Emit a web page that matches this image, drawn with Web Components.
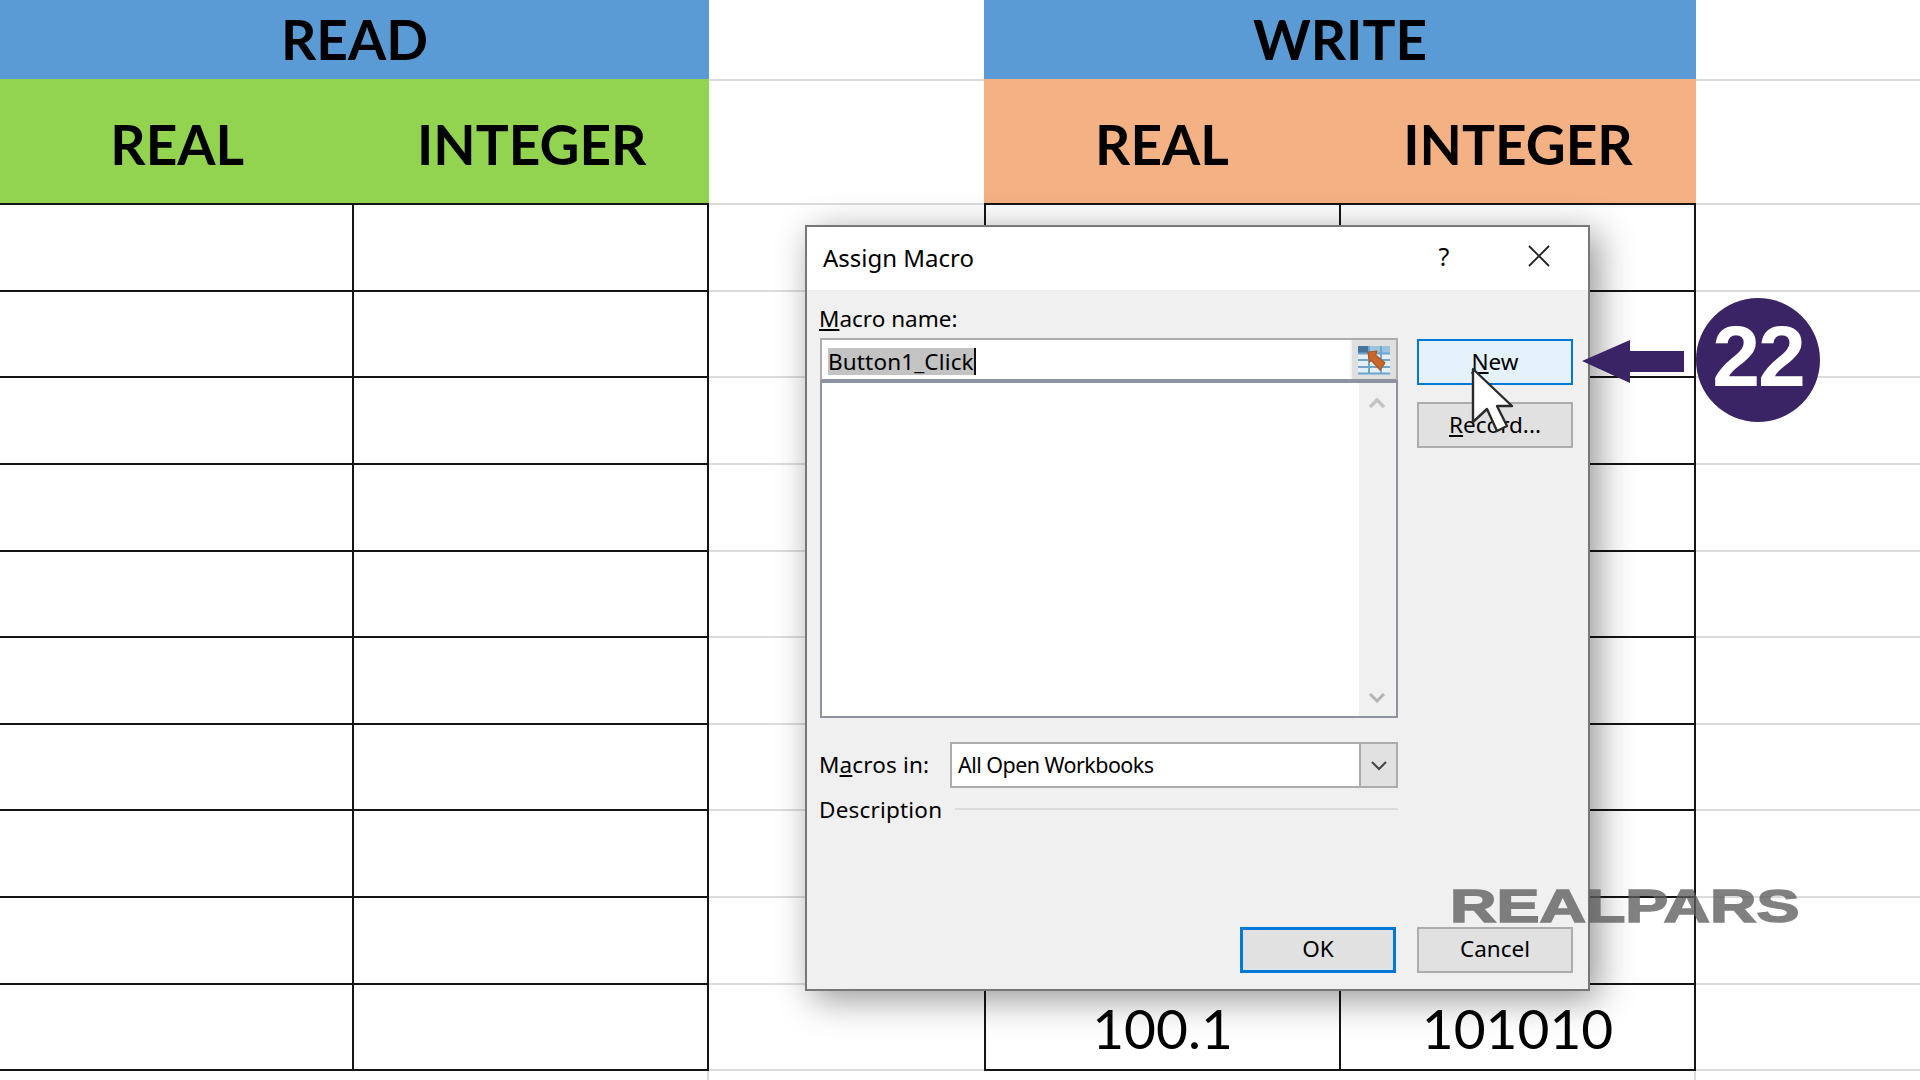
<!DOCTYPE html>
<html lang="en">
<head>
<meta charset="utf-8">
<title>Assign Macro</title>
<style>
html, body { margin: 0; padding: 0; background: #fff; overflow: hidden; }
body { width: 1920px; height: 1080px; position: relative; font-family: "Noto Sans", sans-serif; color: #000; }
</style>
</head>
<body>
<xl-sheet>
	<xl-table title="READ" band="#92d350" left-edge="no"></xl-table>
	<xl-gap></xl-gap>
	<xl-table title="WRITE" band="#f4b183" real="100.1" integer="101010"></xl-table>
	<xl-gap></xl-gap>
</xl-sheet>

<assign-macro>
	<dlg-button slot="side" kind="hover"><u>N</u>ew</dlg-button>
	<dlg-button slot="side"><u>R</u>ecord...</dlg-button>
	<dlg-button slot="foot" kind="default">OK</dlg-button>
	<dlg-button slot="foot">Cancel</dlg-button>
</assign-macro>

<realpars-logo></realpars-logo>
<mouse-cursor></mouse-cursor>
<step-callout number="22"></step-callout>

<script>
	// Spreadsheet background: a table, a gap, a table, a gap.
	class XlSheet extends HTMLElement {
		constructor () {
			super()
			this.attachShadow({ mode: 'open' })
			this.shadowRoot.innerHTML = `
				<style>
					:host { display: grid; grid-template-columns: 709px 275px 712px 224px; height: 1080px; overflow: hidden; }
				</style>
				<slot></slot>
			`
		}
	}

	// Empty cells between the tables, only the pale gridlines show.
	class XlGap extends HTMLElement {
		constructor () {
			super()
			this.attachShadow({ mode: 'open' })
			const rows = Array.from({ length: 11 }, () => '<div class="row"></div>').join('')
			this.shadowRoot.innerHTML = `
				<style>
					:host { display: block; }
					.row { height: 86.65px; box-sizing: border-box; border-bottom: 2px solid #dcdcdc; }
					.top { height: 81px; box-sizing: border-box; border-bottom: 2px solid #dcdcdc; }
					.band { height: 124px; box-sizing: border-box; border-bottom: 2px solid #dcdcdc; }
				</style>
				<div class="top"></div>
				<div class="band"></div>
				${rows}
			`
		}
	}

	class XlTable extends HTMLElement {
		constructor () {
			super()
			this.attachShadow({ mode: 'open' })
		}

		connectedCallback () {
			const title = this.getAttribute('title')
			const band = this.getAttribute('band')
			const real = this.getAttribute('real') || ''
			const integer = this.getAttribute('integer') || ''
			const noEdge = this.getAttribute('left-edge') === 'no'
			const cols = noEdge ? '354px 355px' : '1fr 1fr'
			let rows = ''
			for (let i = 0; i < 10; i++) {
				const last = i === 9
				rows += `<div class="cell">${last ? real : ''}</div><div class="cell">${last ? integer : ''}</div>`
			}
			this.shadowRoot.innerHTML = `
				<style>
					:host { display: block; font-family: Lato, "Open Sans", sans-serif; color: #000; }
					.title { height: 79px; background: #5b9bd5; display: flex; align-items: center; justify-content: center; font-size: 55px; font-weight: 700; padding-bottom: 2px; box-sizing: border-box; }
					.band { height: 124px; background: ${band}; display: grid; grid-template-columns: 1fr 1fr; border-bottom: 2px solid #151515; box-sizing: content-box; }
					.band div { display: flex; align-items: center; justify-content: center; font-size: 55px; font-weight: 700; padding-top: 6px; box-sizing: border-box; }
					.body { display: grid; grid-template-columns: ${cols}; grid-auto-rows: 86.65px; border-left: ${noEdge ? '0' : '2px solid #151515'}; }
					.cell { border-right: 2px solid #151515; border-bottom: 2px solid #151515; box-sizing: border-box; display: flex; align-items: center; justify-content: center; font-size: 55px; padding-top: 2px; }
					.tail { height: 10px; margin-left: auto; width: 2px; background: #dcdcdc; }
				</style>
				<div class="title">${title}</div>
				<div class="band"><div>REAL</div><div>INTEGER</div></div>
				<div class="body">${rows}</div>
				<div class="tail"></div>
			`
		}
	}

	// The Excel dialog, floats over the sheet like a window.
	class AssignMacro extends HTMLElement {
		constructor () {
			super()
			this.attachShadow({ mode: 'open' })
			this.shadowRoot.innerHTML = `
				<style>
					:host {
						position: absolute; left: 805px; top: 225px; width: 785px; height: 766px;
						box-sizing: border-box; display: flex; flex-direction: column;
						background: #f0f0f0; border: 2px solid #777;
						box-shadow: 8px 8px 34px rgba(0,0,0,.42);
						font-family: "Noto Sans", "Open Sans", sans-serif; font-size: 22.5px; color: #000;
					}
					.titlebar { height: 63px; flex: none; background: #fff; display: flex; align-items: center; padding-left: 16px; }
					.titlebar .name { flex: 1; font-size: 24px; padding-bottom: 2px; }
					.help { width: 30px; text-align: center; margin-right: 68px; font-size: 25px; margin-top: -6px; }
					.close { width: 24px; height: 24px; margin-right: 37px; margin-top: -6px; }
					.main { flex: 1; display: flex; flex-direction: column; padding: 0 15px 16px 13px; }
					.top { flex: 1; display: grid; grid-template-columns: 578px 156px; column-gap: 19px; align-items: start; }
					.left { display: flex; flex-direction: column; }
					.label { height: 48px; display: flex; align-items: center; padding-top: 8px; box-sizing: border-box; margin-left: -1px; }
					.input { height: 43px; box-sizing: border-box; border: 2px solid #adadad; border-bottom-color: #8f93a0; background: #fff; display: flex; align-items: stretch; }
					.field { flex: 1; display: flex; align-items: center; padding: 4px 0 0 6px; }
					.sel { background: #c3c3c3; height: 27px; line-height: 27px; border-right: 2px solid #111; letter-spacing: .15px; }
					.pick { width: 44px; background: #dfdfdf; border-left: 2px solid #f4f4f4; display: flex; align-items: center; justify-content: center; }
					.list { height: 337px; box-sizing: border-box; border: 2px solid #8f93a0; background: #fff; display: flex; justify-content: flex-end; }
					.bar { width: 37px; background: #f0f0f0; display: flex; flex-direction: column; justify-content: space-between; align-items: center; padding: 14px 2px 12px 0; box-sizing: border-box; }
					.macros { display: flex; align-items: center; margin-top: 24px; height: 46px; }
					.macros .cap { width: 130px; flex: none; margin-left: -1px; margin-right: 1px; padding-bottom: 2px; letter-spacing: .15px; }
					.combo { flex: 1; height: 46px; box-sizing: border-box; border: 2px solid #acacac; background: #fff; display: flex; align-items: center; }
					.combo .val { flex: 1; padding: 0 0 2px 6px; font-size: 21.5px; letter-spacing: -.55px; }
					.drop { width: 37px; height: 100%; background: #e1e1e1; border-left: 2px solid #acacac; display: flex; align-items: center; justify-content: center; box-sizing: border-box; }
					.desc { display: flex; align-items: center; height: 44px; gap: 13px; margin-left: -1px; }
					.desc span { padding-bottom: 2px; letter-spacing: .2px; }
					.desc i { flex: 1; height: 2px; background: #dcdcdc; margin-top: -2px; }
					.side { display: flex; flex-direction: column; gap: 17px; padding-top: 49px; }
					.foot { display: flex; justify-content: flex-end; gap: 21px; }
					::slotted([slot="foot"]) { padding-bottom: 4px; }
				</style>
				<div class="titlebar">
					<span class="name">Assign Macro</span>
					<span class="help">?</span>
					<svg class="close" viewBox="0 0 24 24" fill="none" stroke="#222" stroke-width="1.8"><path d="M2 2L22 22M22 2L2 22"/></svg>
				</div>
				<div class="main">
					<div class="top">
						<div class="left">
							<div class="label"><span><u>M</u>acro name:</span></div>
							<div class="input">
								<div class="field"><span class="sel">Button1_Click</span></div>
								<div class="pick">
									<svg width="34" height="30" viewBox="0 0 34 30">
										<rect x="1" y="1" width="32" height="28" fill="#e4eff6"/>
										<rect x="1" y="1" width="11" height="7" fill="#47749c"/>
										<rect x="12" y="1" width="21" height="7" fill="#9cc3dc"/>
										<path d="M1 8.5H33M1 15H33M1 22H33M1 28.5H33M12 1V29M24 1V29" stroke="#6aa6cf" stroke-width="2" fill="none"/>
										<path d="M11 7L20 6L18.5 10L28 18L23 25L14.5 15.5L12.5 17Z" fill="#c9682c" stroke="#b0551c" stroke-width="1.2" stroke-linejoin="round"/>
									</svg>
								</div>
							</div>
							<div class="list">
								<div class="bar">
									<svg width="18" height="12" viewBox="0 0 18 12" fill="none" stroke="#c4c4c4" stroke-width="3.4"><path d="M2 10L9 3L16 10"/></svg>
									<svg width="18" height="12" viewBox="0 0 18 12" fill="none" stroke="#b4b4b4" stroke-width="3"><path d="M2 2L9 9L16 2"/></svg>
								</div>
							</div>
							<div class="macros">
								<span class="cap">M<u>a</u>cros in:</span>
								<div class="combo">
									<span class="val">All Open Workbooks</span>
									<div class="drop">
										<svg width="18" height="11" viewBox="0 0 18 11" fill="none" stroke="#444" stroke-width="2"><path d="M2 2L9 9L16 2"/></svg>
									</div>
								</div>
							</div>
							<div class="desc"><span>Description</span><i></i></div>
						</div>
						<div class="side"><slot name="side"></slot></div>
					</div>
					<div class="foot"><slot name="foot"></slot></div>
				</div>
			`
		}
	}

	class DlgButton extends HTMLElement {
		constructor () {
			super()
			this.attachShadow({ mode: 'open' })
			this.shadowRoot.innerHTML = `
				<style>
					:host {
						display: flex; align-items: center; justify-content: center;
						width: 156px; height: 46px; box-sizing: border-box; padding-bottom: 2px;
						background: #e1e1e1; border: 2px solid #adadad; color: #000;
					}
					:host([kind="hover"]) { background: #e5f1fb; border-color: #0078d7; }
					:host([kind="default"]) { border: 3px solid #0078d7; }
				</style>
				<slot></slot>
			`
		}
	}

	// Text is real text, stretched wide to get the look of the wordmark.
	class RealparsLogo extends HTMLElement {
		constructor () {
			super()
			this.attachShadow({ mode: 'open' })
			this.shadowRoot.innerHTML = `
				<style>
					:host { position: absolute; left: 1450px; top: 882px; width: 350px; height: 48px; display: block; opacity: .78; pointer-events: none; }
					span {
						display: inline-block; transform-origin: 0 50%; transform: scaleX(1.4);
						font: 700 46px/48px "Liberation Sans", sans-serif; color: #5d5d5d;
						-webkit-text-stroke: 1.5px #5d5d5d; white-space: nowrap;
					}
				</style>
				<span>REALPARS</span>
			`
		}
	}

	class MouseCursor extends HTMLElement {
		constructor () {
			super()
			this.attachShadow({ mode: 'open' })
			this.shadowRoot.innerHTML = `
				<style>:host { position: absolute; left: 1470px; top: 366px; display: block; width: 46px; height: 70px; }</style>
				<svg width="46" height="70" viewBox="0 0 46 70">
					<path d="M3 3V56L17 43L27 65L37 60L27 40H42Z" fill="#fff" stroke="#2b2b2b" stroke-width="2.4" stroke-linejoin="round"/>
				</svg>
			`
		}
	}

	// Numbered badge with its arrow pointing left.
	class StepCallout extends HTMLElement {
		constructor () {
			super()
			this.attachShadow({ mode: 'open' })
		}

		connectedCallback () {
			this.shadowRoot.innerHTML = `
				<style>
					:host { position: absolute; left: 1582px; top: 298px; display: flex; align-items: center; }
					svg { display: block; margin: 4px 12px 0 0; flex: none; }
					.badge {
						width: 124px; height: 124px; border-radius: 50%; background: #3b2466; color: #fff;
						display: flex; align-items: center; justify-content: center; box-sizing: border-box; padding-bottom: 8px;
						font: 700 86px/1 "Liberation Sans", sans-serif; letter-spacing: -2px;
					}
				</style>
				<svg width="102" height="44" viewBox="0 0 102 44" fill="#3b2466"><path d="M0 21L48 0V11H102V32H48V43Z"/></svg>
				<div class="badge">${this.getAttribute('number')}</div>
			`
		}
	}

	customElements.define('xl-sheet', XlSheet)
	customElements.define('xl-gap', XlGap)
	customElements.define('xl-table', XlTable)
	customElements.define('assign-macro', AssignMacro)
	customElements.define('dlg-button', DlgButton)
	customElements.define('realpars-logo', RealparsLogo)
	customElements.define('mouse-cursor', MouseCursor)
	customElements.define('step-callout', StepCallout)
</script>
</body>
</html>
